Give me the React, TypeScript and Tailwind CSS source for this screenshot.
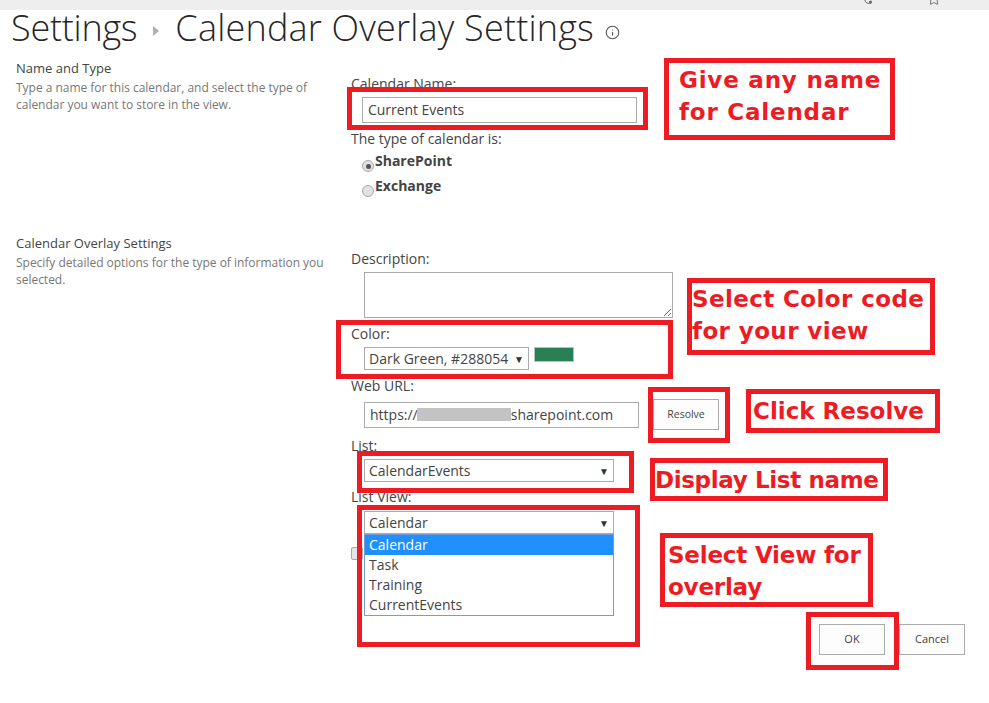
import React from 'react';
import { Info, Star } from 'lucide-react';

const font = { sans: "font-['Open_Sans','Liberation_Sans',sans-serif]" };

// red rectangles + notes pasted on top of the page screenshot
const RedBox: React.FC<{ className: string; children?: React.ReactNode }> = ({ className, children }) => (
  <div className={`absolute border-[5px] border-[#ed1c24] pointer-events-none ${className}`}>{children}</div>
);

const Note: React.FC<{ className?: string; children: React.ReactNode }> = ({ className = '', children }) => (
  <div className={`font-['DejaVu_Sans','Liberation_Sans',sans-serif] font-bold text-[#ed1c24] whitespace-nowrap ${className}`}>
    {children}
  </div>
);

const FieldLabel: React.FC<{ className?: string; children: React.ReactNode }> = ({ className = '', children }) => (
  <div className={`h-[18px] leading-[18px] text-[14px] text-[#444444] ${className}`}>{children}</div>
);

const Caret = () => <span className="text-[10px] leading-none text-[#333333]">▼</span>;

const Select: React.FC<{ label: string; className?: string }> = ({ label, className = '' }) => (
  <div className={`h-[23px] flex items-center justify-between pl-[4px] pr-[4px] border border-[#ababab] bg-white text-[14px] text-[#444444] ${className}`}>
    <span>{label}</span>
    <Caret />
  </div>
);

const Radio: React.FC<{ checked?: boolean; label: string; className?: string }> = ({ checked, label, className = '' }) => (
  <div className={`flex items-start h-[20px] ${className}`}>
    <span className="mt-[7px] w-[12px] h-[12px] rounded-full border border-[#a8a8a8] bg-[#e2e2e2] flex items-center justify-center">
      {checked && <span className="w-[5px] h-[5px] rounded-full bg-[#555555]" />}
    </span>
    <span className="ml-[1px] text-[14px] leading-[16px] font-bold text-[#444444]">{label}</span>
  </div>
);

const Button: React.FC<{ label: string; className?: string }> = ({ label, className = '' }) => (
  <div className={`w-[66px] flex items-center justify-center border border-[#ababab] bg-[#fdfdfd] text-[#444444] ${className}`}>
    {label}
  </div>
);

const SectionHead: React.FC<{ title: string; lines: string[] }> = ({ title, lines }) => (
  <div className="w-[351px] shrink-0 pl-[16px]">
    <div className="mb-[2px] text-[13px] leading-[18px] text-[#444444]">{title}</div>
    {lines.map((line) => (
      <div key={line} className="text-[12px] leading-[17px] tracking-[-0.02px] text-[#777777] whitespace-nowrap">{line}</div>
    ))}
  </div>
);

export default function App() {
  return (
    <div className={`relative w-[989px] h-[703px] overflow-hidden bg-white ${font.sans}`}>
      {/* browser bar, cut off at the top */}
      <div className="h-[10px] bg-[#eeeeee] overflow-hidden flex justify-end pr-[48px] gap-[52px]">
        <svg width="12" height="10" viewBox="0 0 12 10" className="text-[#666666]">
          <path d="M2 0 C2 3 5 4 8 3" fill="none" stroke="currentColor" />
          <circle cx="7.5" cy="2" r="1.5" fill="currentColor" />
        </svg>
        <Star size={14} strokeWidth={1.5} className="-mt-[8px] text-[#666666]" />
      </div>

      {/* page title */}
      <div className="h-[40px] -mt-[2px] flex items-center pl-[11px] text-[36px] leading-[40px] font-light text-[#262626] whitespace-nowrap">
        <span className="tracking-[-0.25px]">Settings</span>
        <span className="ml-[16px] mr-[16px] mt-[6px] w-0 h-0 border-y-[5px] border-y-transparent border-l-[6px] border-l-[#b1b1b1]" />
        <span className="tracking-[0.2px]">Calendar Overlay Settings</span>
        <Info size={15} strokeWidth={1.75} className="ml-[11px] mt-[9px] text-[#555555]" />
      </div>

      {/* Name and Type */}
      <div className="flex mt-[11px] h-[175px]">
        <SectionHead
          title="Name and Type"
          lines={['Type a name for this calendar, and select the type of', 'calendar you want to store in the view.']}
        />
        <div className="flex-1 pt-[16px]">
          <FieldLabel>Calendar Name:</FieldLabel>
          <div className="ml-[11px] mt-[4px] w-[275px] h-[26px] flex items-center pl-[5px] pb-[1px] border border-[#ababab] text-[14px] tracking-[-0.05px] text-[#444444]">
            Current Events
          </div>
          <FieldLabel className="mt-[7px]">The type of calendar is:</FieldLabel>
          <Radio checked label="SharePoint" className="ml-[11px] mt-[5px]" />
          <Radio label="Exchange" className="ml-[11px] mt-[5px]" />
        </div>
      </div>

      {/* Calendar Overlay Settings */}
      <div className="flex">
        <SectionHead
          title="Calendar Overlay Settings"
          lines={['Specify detailed options for the type of information you', 'selected.']}
        />
        <div className="flex-1 pt-[9px]">
          <FieldLabel className="mt-[7px]">Description:</FieldLabel>
          <textarea readOnly className="block ml-[13px] mt-[4px] w-[309px] h-[46px] border border-[#ababab] outline-none" />

          <FieldLabel className="mt-[7px]">Color:</FieldLabel>
          <div className="flex items-start ml-[13px] mt-[4px]">
            <Select label="Dark Green, #288054" className="w-[165px]" />
            <div className="ml-[5px] w-[40px] h-[15px] bg-[#288054] border border-[#b5c4bb]" />
          </div>

          <FieldLabel className="mt-[7px]">Web URL:</FieldLabel>
          <div className="flex items-center ml-[13px] mt-[4px]">
            <div className="w-[275px] h-[26px] flex items-center pl-[5px] border border-[#ababab] text-[14px] text-[#444444] whitespace-nowrap">
              https://
              <span className="w-[94px] h-[13px] -ml-[1px] bg-[#c3c3c3]" />
              sharepoint.com
            </div>
            <Button label="Resolve" className="ml-[14px] h-[31px] pt-[1px] text-[10.5px]" />
          </div>

          <FieldLabel className="mt-[7px]">List:</FieldLabel>
          <Select label="CalendarEvents" className="ml-[13px] mt-[4px] w-[250px]" />

          <FieldLabel className="mt-[6px]">List View:</FieldLabel>
          <div className="relative ml-[13px] mt-[5px] w-[250px]">
            <Select label="Calendar" className="border-[#5f8bd6]" />
            {/* open dropdown */}
            <div className="absolute left-0 top-[23px] w-full h-[82px] border border-[#7a9ad0] bg-white text-[14px] leading-[20px] text-[#444444] z-10">
              <div className="h-[20px] pl-[4px] bg-[#1e90ff] text-white">Calendar</div>
              <div className="h-[20px] pl-[4px]">Task</div>
              <div className="h-[20px] pl-[4px]">Training</div>
              <div className="h-[20px] pl-[4px]">CurrentEvents</div>
            </div>
            {/* checkbox behind the dropdown */}
            <div className="absolute -left-[13px] top-[36px] w-[12px] h-[13px] rounded-[2px] border border-[#a8a8a8] bg-[#e6e6e6]" />
          </div>
        </div>
      </div>

      <div className="flex justify-end gap-[14px] mt-[90px] pr-[24px]">
        <Button label="OK" className="h-[31px] text-[11px]" />
        <Button label="Cancel" className="h-[31px] text-[11px]" />
      </div>

      {/* annotations */}
      <RedBox className="left-[347px] top-[87px] w-[301px] h-[43px]" />
      <RedBox className="left-[664px] top-[58px] w-[231px] h-[82px] pl-[10px] pt-[1px]">
        <Note className="text-[23px] leading-[32px] tracking-[0.8px]">Give any name<br />for Calendar</Note>
      </RedBox>
      <RedBox className="left-[687px] top-[278px] w-[248px] h-[77px] pl-[0px]">
        <Note className="text-[23px] leading-[32px] tracking-[0.4px]">Select Color code<br />for your view</Note>
      </RedBox>
      <RedBox className="left-[746px] top-[389px] w-[194px] h-[44px] pl-[2px] pt-[1px]">
        <Note className="text-[23px] leading-[33px]">Click Resolve</Note>
      </RedBox>
      <RedBox className="left-[336px] top-[320px] w-[337px] h-[59px]" />
      <RedBox className="left-[648px] top-[387px] w-[82px] h-[56px]" />
      <RedBox className="left-[357px] top-[451px] w-[277px] h-[42px]" />
      <RedBox className="left-[650px] top-[458px] w-[238px] h-[43px] pt-[1px]">
        <Note className="text-[23px] leading-[33px] tracking-[-0.35px]">Display List name</Note>
      </RedBox>
      <RedBox className="left-[357px] top-[505px] w-[283px] h-[142px]" />
      <RedBox className="left-[660px] top-[533px] w-[213px] h-[74px] pl-[3px] pt-[1px]">
        <Note className="text-[23px] leading-[32px] tracking-[-0.2px]">Select View for<br />overlay</Note>
      </RedBox>
      <RedBox className="left-[806px] top-[612px] w-[93px] h-[58px]" />
    </div>
  );
}
